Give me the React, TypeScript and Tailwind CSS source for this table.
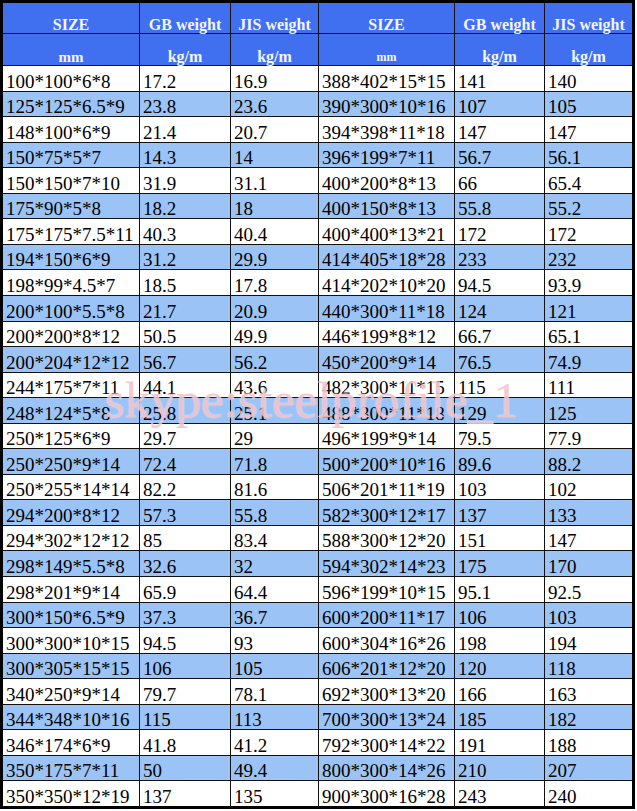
const rows: string[][] = [
  ["100*100*6*8", "17.2", "16.9", "388*402*15*15", "141", "140"],
  ["125*125*6.5*9", "23.8", "23.6", "390*300*10*16", "107", "105"],
  ["148*100*6*9", "21.4", "20.7", "394*398*11*18", "147", "147"],
  ["150*75*5*7", "14.3", "14", "396*199*7*11", "56.7", "56.1"],
  ["150*150*7*10", "31.9", "31.1", "400*200*8*13", "66", "65.4"],
  ["175*90*5*8", "18.2", "18", "400*150*8*13", "55.8", "55.2"],
  ["175*175*7.5*11", "40.3", "40.4", "400*400*13*21", "172", "172"],
  ["194*150*6*9", "31.2", "29.9", "414*405*18*28", "233", "232"],
  ["198*99*4.5*7", "18.5", "17.8", "414*202*10*20", "94.5", "93.9"],
  ["200*100*5.5*8", "21.7", "20.9", "440*300*11*18", "124", "121"],
  ["200*200*8*12", "50.5", "49.9", "446*199*8*12", "66.7", "65.1"],
  ["200*204*12*12", "56.7", "56.2", "450*200*9*14", "76.5", "74.9"],
  ["244*175*7*11", "44.1", "43.6", "482*300*11*15", "115", "111"],
  ["248*124*5*8", "25.8", "25.1", "488*300*11*18", "129", "125"],
  ["250*125*6*9", "29.7", "29", "496*199*9*14", "79.5", "77.9"],
  ["250*250*9*14", "72.4", "71.8", "500*200*10*16", "89.6", "88.2"],
  ["250*255*14*14", "82.2", "81.6", "506*201*11*19", "103", "102"],
  ["294*200*8*12", "57.3", "55.8", "582*300*12*17", "137", "133"],
  ["294*302*12*12", "85", "83.4", "588*300*12*20", "151", "147"],
  ["298*149*5.5*8", "32.6", "32", "594*302*14*23", "175", "170"],
  ["298*201*9*14", "65.9", "64.4", "596*199*10*15", "95.1", "92.5"],
  ["300*150*6.5*9", "37.3", "36.7", "600*200*11*17", "106", "103"],
  ["300*300*10*15", "94.5", "93", "600*304*16*26", "198", "194"],
  ["300*305*15*15", "106", "105", "606*201*12*20", "120", "118"],
  ["340*250*9*14", "79.7", "78.1", "692*300*13*20", "166", "163"],
  ["344*348*10*16", "115", "113", "700*300*13*24", "185", "182"],
  ["346*174*6*9", "41.8", "41.2", "792*300*14*22", "191", "188"],
  ["350*175*7*11", "50", "49.4", "800*300*14*26", "210", "207"],
  ["350*350*12*19", "137", "135", "900*300*16*28", "243", "240"],
]

const titles = ["SIZE", "GB weight", "JIS weight", "SIZE", "GB weight", "JIS weight"]
const units = ["mm", "kg/m", "kg/m", "mm", "kg/m", "kg/m"]

export default function App() {
  return (
    <div className="relative w-[637px] h-[811px] bg-white overflow-hidden font-['Liberation_Serif','Times_New_Roman',serif]">
      <div className="w-[635px] border-[3px] border-black bg-black">
        <div className="grid grid-cols-[136px_90px_87px_135px_89px_87px] grid-rows-[30px_31px_repeat(29,minmax(0,1fr))] h-[803px] gap-px bg-[#111]">
          {titles.map((t, i) => (
            <div
              key={"t" + i}
              className="bg-[#4070f0] text-[#f4f6ff] font-['Liberation_Serif',serif] font-bold text-[16px] leading-none flex items-end justify-center"
            >
              {t}
            </div>
          ))}
          {units.map((u, i) => (
            <div
              key={"u" + i}
              className={
                "bg-[#4070f0] text-[#f4f6ff] font-['Liberation_Serif',serif] font-bold leading-none flex items-end justify-center " +
                (i === 0 ? "text-[15px]" : i === 3 ? "text-[12px] pb-[2px]" : "text-[16px]")
              }
            >
              {u}
            </div>
          ))}
          {rows.map((r, ri) =>
            r.map((c, ci) => (
              <div
                key={ri + "-" + ci}
                className={
                  "text-[19px] leading-none text-black flex items-end pl-[3px] overflow-hidden whitespace-nowrap " +
                  (ri % 2 === 1 ? "bg-[#9cc3f6]" : "bg-white")
                }
              >
                {c}
              </div>
            ))
          )}
        </div>
      </div>

      {/* watermark */}
      <div className="absolute left-[105px] top-[375px] text-[51px] leading-none text-[#f4c4ca] opacity-90 pointer-events-none whitespace-nowrap [text-shadow:0_0_2px_rgba(255,255,255,0.8)]">
        skype:steelprofile_1
      </div>
    </div>
  )
}
